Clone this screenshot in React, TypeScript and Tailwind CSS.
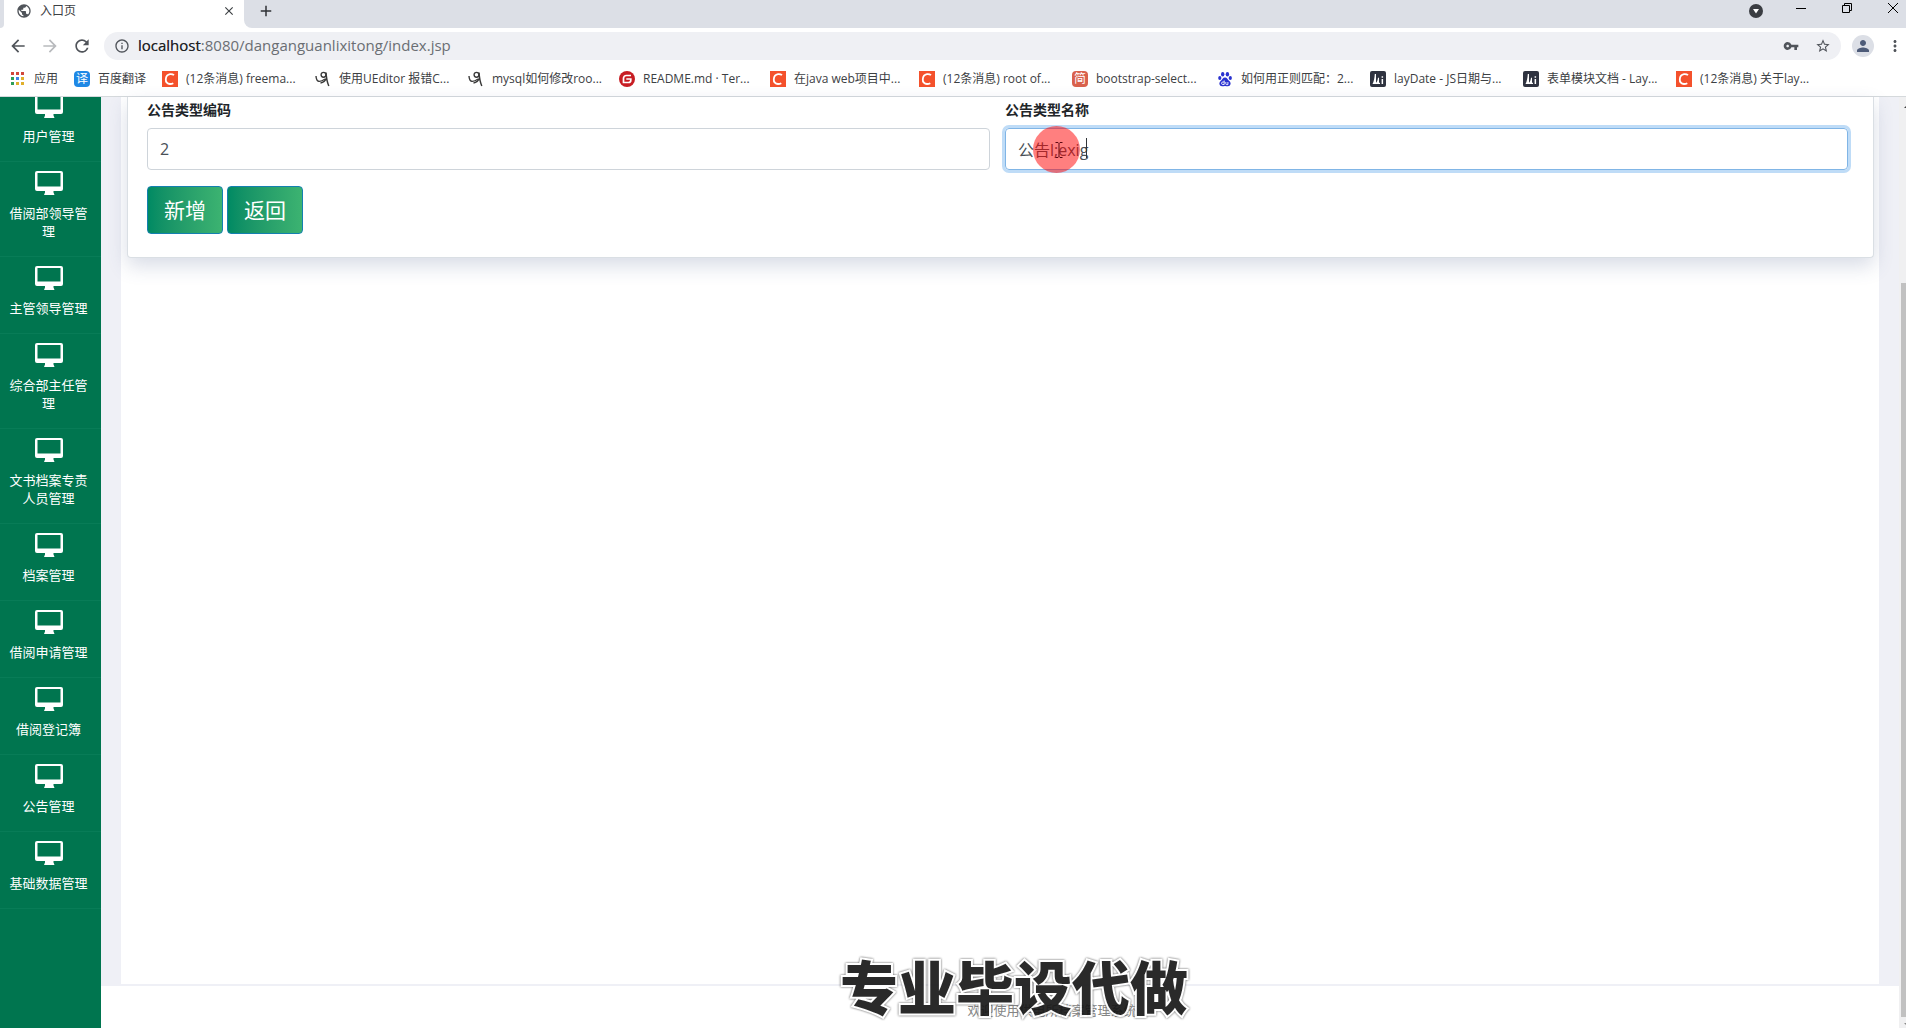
import { useState } from 'react';
import type { ReactNode } from 'react';
import { MdArrowBack, MdArrowForward, MdClose, MdInfoOutline, MdMoreVert, MdPerson, MdPublic, MdRefresh, MdStarBorder, MdVpnKey, MdAdd } from 'react-icons/md';

type IconKind = 'translate' | 'csdn' | 'ue' | 'gitee' | 'jian' | 'baidu' | 'lay';

const bookmarks: { icon: IconKind; title: string; width: string }[] = [
  { icon: 'translate', title: '百度翻译', width: 'w-[88px]' },
  { icon: 'csdn', title: '(12条消息) freema...', width: 'w-[153px]' },
  { icon: 'ue', title: '使用UEditor 报错C...', width: 'w-[153px]' },
  { icon: 'ue', title: 'mysql如何修改roo...', width: 'w-[151px]' },
  { icon: 'gitee', title: 'README.md · Ter...', width: 'w-[151px]' },
  { icon: 'csdn', title: '在java web项目中...', width: 'w-[149px]' },
  { icon: 'csdn', title: '(12条消息) root of...', width: 'w-[153px]' },
  { icon: 'jian', title: 'bootstrap-select...', width: 'w-[145px]' },
  { icon: 'baidu', title: '如何用正则匹配：2...', width: 'w-[153px]' },
  { icon: 'lay', title: 'layDate - JS日期与...', width: 'w-[153px]' },
  { icon: 'lay', title: '表单模块文档 - Lay...', width: 'w-[153px]' },
  { icon: 'csdn', title: '(12条消息) 关于lay...', width: 'w-[153px]' },
];

const menuItems = [
  '用户管理',
  '借阅部领导管理',
  '主管领导管理',
  '综合部主任管理',
  '文书档案专责人员管理',
  '档案管理',
  '借阅申请管理',
  '借阅登记簿',
  '公告管理',
  '基础数据管理',
];

function BookmarkIcon({ kind }: { kind: IconKind }) {
  switch (kind) {
    case 'translate':
      return <span className="flex size-4 shrink-0 items-center justify-center rounded-sm bg-[#1e88e5] text-[12px] leading-4 text-white">译</span>;
    case 'jian':
      return <span className="flex size-4 shrink-0 items-center justify-center rounded-sm bg-[#d9614c] text-[12px] leading-4 text-white">简</span>;
    case 'csdn':
      return (
        <svg className="size-4 shrink-0" viewBox="0 0 16 16">
          <rect width="16" height="16" fill="#f4512c" />
          <path d="M12 4.2C10.9 3.2 9.400 2.900 8 3.100 5.500 3.500 4 5.600 3.800 8.200c-.2 3 1.600 4.700 4.200 4.800 1.300 0 2.400-.3 3.300-.8" fill="none" stroke="#fff" strokeWidth="1.800" />
        </svg>
      );
    case 'ue':
      return (
        <svg className="size-4 shrink-0" viewBox="0 0 16 16" fill="none" stroke="#3a3a3a">
          <path d="M1 5c.2 3 .8 5 2.700 5.300 2 .3 4-.6 6.300-2.300" strokeWidth="1.400" />
          <circle cx="8.500" cy="3.800" r="2.400" strokeWidth="1.400" />
          <path d="M11 1.500c.3 4.500.8 9 2.800 13.500M5.500 12c3-.5 5-2.500 6-5" strokeWidth="1.500" />
        </svg>
      );
    case 'gitee':
      return (
        <svg className="size-4 shrink-0" viewBox="0 0 16 16">
          <circle cx="8" cy="8" r="8" fill="#c71d23" />
          <path d="M12 4.500H7.300A2.800 2.800 0 0 0 4.500 7.300v4.200h5a2.300 2.300 0 0 0 2.300-2.300V8H7.300" fill="none" stroke="#fff" strokeWidth="1.700" />
        </svg>
      );
    case 'baidu':
      return (
        <svg className="size-4 shrink-0" viewBox="0 0 16 16" fill="#2a32d0">
          <ellipse cx="5.700" cy="3.300" rx="1.700" ry="2.300" />
          <ellipse cx="10.400" cy="3.300" rx="1.700" ry="2.300" />
          <ellipse cx="2.800" cy="7" rx="1.600" ry="2.100" />
          <ellipse cx="13.300" cy="7" rx="1.600" ry="2.100" />
          <path d="M8 6.500c2.200 0 2.700 2.200 4.300 3.500 2.400 2 1.200 5.200-1.300 5.200-1 0-2-.3-3-.3s-2 .3-3 .3c-2.500 0-3.700-3.200-1.300-5.200C5.300 8.700 5.800 6.500 8 6.500Z" />
          <path d="M7.200 9.500v4H5.800a1.200 1.200 0 0 1 0-2.500h1.400M8.800 11v1.800c0 .5.300.8.800.8h1.300V11" fill="none" stroke="#fff" strokeWidth=".9" />
        </svg>
      );
    case 'lay':
      return (
        <svg className="size-4 shrink-0" viewBox="0 0 16 16">
          <rect width="16" height="16" rx="2" fill="#2f3340" />
          <path d="M2.500 13c1.400-2.500 2-6 2.300-10h1.200v8.800c1-.8 1.800-2.800 2-5h1v5h1V13ZM11.600 8h1.500v5h-1.500zM11.600 5.300h1.500v1.500h-1.500z" fill="#fff" />
        </svg>
      );
  }
}

function AppsIcon() {
  return (
    <svg className="size-[14px] shrink-0" viewBox="0 0 14 14">
      <path d="M0 0h3v3H0zM5 0h3v3H5zM10 0h3v3h-3z" fill="#d2483c" />
      <path d="M0 5h3v3H0zM0 10h3v3H0z" fill="#2f9e57" />
      <path d="M5 5h3v3H5z" fill="#3f83e8" />
      <path d="M5 10h3v3H5zM10 5h3v3h-3zM10 10h3v3h-3z" fill="#e0b02c" />
    </svg>
  );
}

function MonitorIcon() {
  return (
    <svg className="h-6 w-7" viewBox="0 0 28 24" fill="#fff">
      <path fillRule="evenodd" d="M2 0h24a2 2 0 0 1 2 2v16a2 2 0 0 1-2 2h-7.500v1.500l1 2.500H9l1-2.500V20H2a2 2 0 0 1-2-2V2a2 2 0 0 1 2-2ZM2.500 2v13.500h23V2Z" />
    </svg>
  );
}

function TabStrip() {
  return (
    <div className="flex h-7 bg-white">
      <div className="w-1 rounded-br-lg bg-[#dcdfe6]" />
      <div className="flex w-60 items-center bg-white pr-2 pb-1.5 pl-3">
        <MdPublic className="size-4 text-[#50545a]" />
        <span className="ml-2 flex-1 text-[12px] leading-4 text-[#3c4043]">入口页</span>
        <button aria-label="关闭标签页" className="text-[#3c4043]">
          <MdClose className="size-3.5" />
        </button>
      </div>
      <div className="flex flex-1 rounded-bl-lg bg-[#dcdfe6]">
        <button aria-label="新标签页" className="flex w-11 items-center justify-center pb-1.5 text-[#2f3236]">
          <MdAdd className="size-[18px]" />
        </button>
        <div className="ml-auto flex items-start pt-0.5 text-black">
          <button aria-label="搜索标签页" className="mt-0.5 mr-8">
            <svg className="size-[14px]" viewBox="0 0 14 14">
              <circle cx="7" cy="7" r="7" fill="#3a3d42" />
              <path d="M4 5h6L7 9.500Z" fill="#fff" />
            </svg>
          </button>
          <button aria-label="最小化" className="mr-[34px]">
            <svg className="size-3" viewBox="0 0 12 12" stroke="currentColor">
              <path d="M1 6.500h10" />
            </svg>
          </button>
          <button aria-label="还原" className="mr-[34px]">
            <svg className="size-3" viewBox="0 0 12 12" fill="none" stroke="currentColor">
              <path d="M1.500 3.500h7v7h-7zM3.500 3.500v-2h7v7h-2" />
            </svg>
          </button>
          <button aria-label="关闭" className="mr-[7px]">
            <svg className="size-3" viewBox="0 0 12 12" stroke="currentColor">
              <path d="M1 1l10 10M11 1L1 11" />
            </svg>
          </button>
        </div>
      </div>
    </div>
  );
}

function AddressBar() {
  const [url, setUrl] = useState('localhost:8080/danganguanlixitong/index.jsp');
  const host = url.split(':')[0];

  return (
    <div className="flex h-9 items-center bg-white pr-0.5 pl-2 text-[#50545a]">
      <button aria-label="后退" className="mr-3">
        <MdArrowBack className="size-5" />
      </button>
      <button aria-label="前进" className="mr-3 text-[#b8babd]">
        <MdArrowForward className="size-5" />
      </button>
      <button aria-label="重新加载">
        <MdRefresh className="size-5" />
      </button>
      <div className="ml-3 flex h-7 flex-1 items-center rounded-full bg-[#eff0f4] pr-2.5 pl-2.5">
        <MdInfoOutline className="size-4" />
        <div className="relative ml-2 flex-1 pb-0.5 text-[15px] leading-5">
          <input
            aria-label="地址"
            value={url}
            onChange={(e) => setUrl(e.target.value)}
            className="block w-full bg-transparent text-[#6a6e73] outline-none"
          />
          <span aria-hidden="true" className="pointer-events-none absolute top-0 left-0 text-[#202124]">{host}</span>
        </div>
        <button aria-label="密码" className="mr-4">
          <MdVpnKey className="size-4" />
        </button>
        <button aria-label="收藏">
          <MdStarBorder className="size-4" />
        </button>
      </div>
      <button aria-label="用户" className="ml-[11px] flex size-[22px] items-center justify-center rounded-full bg-[#dcdfe6] text-[#4d5b78]">
        <MdPerson className="size-[18px]" />
      </button>
      <button aria-label="菜单" className="ml-3">
        <MdMoreVert className="size-[18px]" />
      </button>
    </div>
  );
}

function BookmarkBar() {
  return (
    <nav className="flex h-[33px] items-center overflow-hidden border-b border-[#d5d9dc] bg-white pb-0.5 pl-[11px] text-[12px] leading-4 whitespace-nowrap text-[#3c4043]">
      <a href="#apps" className="flex w-[63px] shrink-0 items-center gap-[9px]">
        <AppsIcon />
        应用
      </a>
      {bookmarks.map((item, i) => (
        <a key={i} href={`#bookmark-${i}`} className={`flex shrink-0 items-center gap-2 ${item.width}`}>
          <BookmarkIcon kind={item.icon} />
          {item.title}
        </a>
      ))}
    </nav>
  );
}

function Sidebar() {
  return (
    <aside className="w-[101px] shrink-0 overflow-hidden bg-[#00754f]">
      <ul className="-mt-3">
        {menuItems.map((label) => (
          <li key={label} className="border-b border-[#087c57]">
            <a href={`#${label}`} className="flex flex-col items-center gap-[9px] pt-[9px] pr-3 pb-4 pl-2 text-center text-[13px] leading-[18px] text-white">
              <MonitorIcon />
              <span>{label}</span>
            </a>
          </li>
        ))}
      </ul>
    </aside>
  );
}

function Field({ id, label, children }: { id: string; label: string; children: ReactNode }) {
  return (
    <div className="flex-1">
      <label htmlFor={id} className="mb-2 block text-[14px] leading-5 font-bold text-[#212529]">
        {label}
      </label>
      <div className="relative">{children}</div>
    </div>
  );
}

function TypeForm() {
  const [code, setCode] = useState('2');
  const [name, setName] = useState('公告l;exig');

  return (
    <form
      onSubmit={(e) => e.preventDefault()}
      className="mr-[5px] ml-1.5 rounded-b border border-t-0 border-[#dadfe4] bg-white pt-[3px] pr-[25px] pb-[23px] pl-[19px] shadow-[0_8px_20px_rgba(60,80,130,0.2)]"
    >
      <div className="flex gap-[15px]">
        <Field id="type-code" label="公告类型编码">
          <input
            id="type-code"
            value={code}
            onChange={(e) => setCode(e.target.value)}
            className="h-[42px] w-full rounded border border-[#ced4da] px-3 text-[16px] text-[#495057] outline-none"
          />
        </Field>
        <Field id="type-name" label="公告类型名称">
          <input
            id="type-name"
            value={name}
            onChange={(e) => setName(e.target.value)}
            className="h-[42px] w-full rounded border border-[#80b5e6] px-3 text-[16px] text-[#495057] shadow-[0_0_0_3px_#bfdcf7] outline-none"
          />
          <span className="pointer-events-none absolute top-2.5 left-[81px] h-5 w-px bg-[#303438]" />
          {/* click highlight with the text cursor */}
          <span className="pointer-events-none absolute -top-0.5 left-7 flex size-[47px] items-center justify-center rounded-full bg-[#ff0000]/50">
            <svg className="ml-1 h-4 w-2" viewBox="0 0 8 16" fill="none" stroke="#5c0a14">
              <path d="M.5 .5h2.500L4 1.500 5 .5h2.500M4 1.500v13M.5 15.500h2.500l1-1 1 1h2.500" />
            </svg>
          </span>
        </Field>
      </div>
      <div className="mt-4 flex gap-1 text-[21px] leading-7 text-white">
        <button type="submit" className="h-12 w-[76px] rounded border border-[#1480b0] bg-linear-to-r from-[#008a63] to-[#3cb371]">新增</button>
        <button type="button" className="h-12 w-[76px] rounded border border-[#1480b0] bg-linear-to-r from-[#008a63] to-[#3cb371]">返回</button>
      </div>
    </form>
  );
}

function Scrollbar() {
  return (
    <div className="flex w-[7px] shrink-0 flex-col overflow-hidden bg-[#f0f0f1] pl-0.5">
      <svg className="h-[186px] w-4 shrink-0" viewBox="0 0 16 186">
        <path d="M3 11l4-4 4 4Z" fill="#404040" />
      </svg>
      <div className="w-[15px] flex-1 bg-[#c1c1c1]" />
      <svg className="h-[11px] w-4 shrink-0" viewBox="0 0 16 11">
        <path d="M3 6h8L7 10Z" fill="#8a8a8a" />
      </svg>
    </div>
  );
}

export default function App() {
  return (
    <div className="flex h-screen flex-col overflow-hidden bg-white font-['Open_Sans','Noto_Sans_CJK_SC',sans-serif]">
      <header>
        <TabStrip />
        <AddressBar />
        <BookmarkBar />
      </header>

      <div className="flex min-h-0 flex-1">
        <Sidebar />
        <div className="flex min-w-0 flex-1 flex-col">
          <main className="flex flex-1 flex-col bg-[#eff0f6] px-5 pb-0.5">
            <div className="flex-1 bg-white">
              <TypeForm />
            </div>
          </main>
          <footer className="relative h-[42px] bg-white">
            <p className="pt-3.5 pl-[104px] text-center text-[13px] leading-5 text-[#858585]">欢迎使用供电所档案管理系统</p>
            <p className="pointer-events-none absolute inset-x-0 bottom-0.5 pl-7 text-center text-[58px] leading-[76px] font-black text-[#141414] opacity-90 drop-shadow-[0_0_1px_#444] [-webkit-text-stroke:4px_#fff] [paint-order:stroke_fill]">
              专业毕设代做
            </p>
          </footer>
        </div>
        <Scrollbar />
      </div>
    </div>
  );
}
